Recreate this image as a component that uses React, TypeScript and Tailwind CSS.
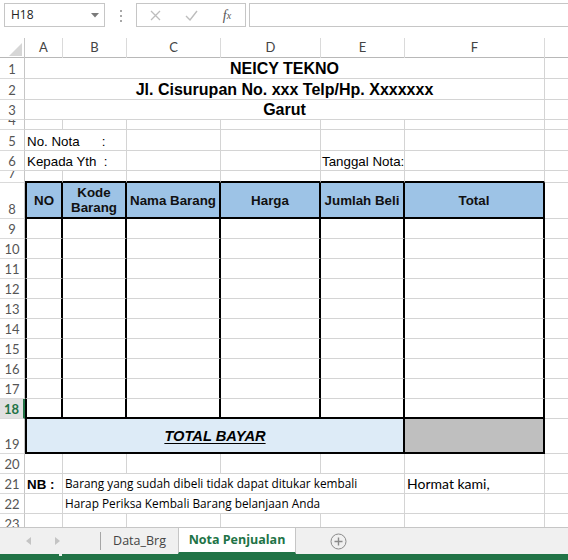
import React from "react";

const R: Record<string, string> = {
  g: "border-r border-r-[#d4d4d4]",
  k: "border-r-2 border-r-black",
  n: "",
};
const B: Record<string, string> = {
  g: "border-b border-b-[#d4d4d4]",
  k: "border-b-2 border-b-black",
  n: "",
};
const SPAN: Record<number, string> = {
  1: "",
  2: "col-span-2",
  4: "col-span-4",
  5: "col-span-5",
  6: "col-span-6",
};

type CellProps = {
  r?: string;
  b?: string;
  l?: boolean;
  span?: number;
  className?: string;
  children?: React.ReactNode;
};

const Cell = ({ r = "g", b = "g", l = false, span = 1, className = "", children }: CellProps) => (
  <div
    className={`${R[r]} ${B[b]} ${l ? "border-l-2 border-l-black" : ""} ${SPAN[span]} min-w-0 overflow-hidden whitespace-nowrap ${className}`}
  >
    {children}
  </div>
);

const Row = ({
  n,
  h,
  sel = false,
  children,
}: {
  n: number;
  h: string;
  sel?: boolean;
  children?: React.ReactNode;
}) => (
  <div className={`grid grid-cols-[25px_38px_64px_94px_100px_84px_140px_1fr] shrink-0 ${h}`}>
    <div
      className={`flex items-end justify-center overflow-hidden border-b border-b-[#dadada] font-['Lato',sans-serif] text-[13px] leading-none ${
        sel
          ? "border-r-2 border-r-[#217346] bg-[#e1e1e1] font-bold text-[#217346]"
          : "border-r border-r-[#c6c6c6] text-[#555]"
      }`}
    >
      <span className="pb-[2px]">{n}</span>
    </div>
    {children}
  </div>
);

const Blank = () => (
  <>
    <Cell />
    <Cell />
    <Cell />
    <Cell />
    <Cell />
    <Cell />
    <Cell r="n" />
  </>
);

const TableRow = ({ n, last = false, sel = false }: { n: number; last?: boolean; sel?: boolean }) => {
  const b = last ? "k" : "g";
  return (
    <Row n={n} h="h-[20px]" sel={sel}>
      <Cell l r="k" b={b} />
      <Cell r="k" b={b} />
      <Cell r="k" b={b} />
      <Cell r="k" b={b} />
      <Cell r="k" b={b} />
      <Cell r="k" b={b} />
      <Cell r="n" />
    </Row>
  );
};

const arial = "font-['Liberation_Sans',Arial,sans-serif]";

export default function App() {
  const head = `${arial} flex items-center justify-center bg-[#9dc3e6] text-center text-[13.33px] font-bold leading-[15px] text-[#111]`;
  const note = "flex items-end pb-[3px] pl-[2px] font-['Open_Sans',sans-serif] text-[11.8px] leading-none text-black";
  return (
    <div className="flex h-[560px] w-[568px] flex-col overflow-hidden bg-white">
      {/* formula bar */}
      <div className="flex h-[38px] shrink-0 items-start gap-0 pt-[3px] font-['Open_Sans',sans-serif]">
        <div className="ml-[4px] flex h-[24px] w-[101px] items-center justify-between border border-[#c6c6c6] pl-[6px] pr-[5px] text-[12px] text-[#222]">
          <span>H18</span>
          <svg width="8" height="5" viewBox="0 0 8 5">
            <path d="M0 0h8L4 4.5z" fill="#7a7a7a" />
          </svg>
        </div>
        <div className="flex w-[31px] flex-col items-center gap-[3px] pt-[7px]">
          <span className="h-[2px] w-[2px] bg-[#a8a8a8]" />
          <span className="h-[2px] w-[2px] bg-[#a8a8a8]" />
          <span className="h-[2px] w-[2px] bg-[#a8a8a8]" />
        </div>
        <div className="flex h-[24px] w-[110px] items-center border border-[#c6c6c6]">
          <div className="flex w-[36px] justify-center">
            <svg width="11" height="11" viewBox="0 0 11 11">
              <path d="M1 1l9 9M10 1l-9 9" stroke="#bdbdbd" strokeWidth="1.3" />
            </svg>
          </div>
          <div className="flex w-[36px] justify-center">
            <svg width="13" height="11" viewBox="0 0 13 11">
              <path d="M1 6l4 4L12 1" stroke="#bdbdbd" strokeWidth="1.4" fill="none" />
            </svg>
          </div>
          <div className="flex w-[36px] justify-center font-['Liberation_Serif',serif] text-[14px] italic text-[#555]">
            f<span className="mt-[3px] text-[10px]">x</span>
          </div>
        </div>
        <div className="ml-[3px] h-[24px] flex-1 border border-r-0 border-[#c6c6c6]" />
      </div>

      {/* sheet */}
      <div className="flex h-[489px] shrink-0 flex-col overflow-hidden">
        {/* column headers */}
        <div className="grid h-[20px] shrink-0 grid-cols-[25px_38px_64px_94px_100px_84px_140px_1fr] border-b border-b-[#b8b8b8] font-['Lato',sans-serif] text-[13px] text-[#444]">
          <div className="flex items-end justify-end border-r border-r-[#c6c6c6] pb-[2px] pr-[2px]">
            <svg width="13" height="13" viewBox="0 0 13 13">
              <path d="M13 0v13H0z" fill="#d6d6d6" />
            </svg>
          </div>
          {["A", "B", "C", "D", "E", "F"].map((c) => (
            <div key={c} className="flex items-center justify-center border-r border-r-[#dadada]">
              {c}
            </div>
          ))}
          <div />
        </div>

        <Row n={1} h="h-[21px]">
          <Cell span={6} className={`${arial} flex items-end justify-center pb-[1px] text-[16px] font-bold leading-none text-black`}>
            NEICY TEKNO
          </Cell>
          <Cell r="n" />
        </Row>
        <Row n={2} h="h-[21px]">
          <Cell span={6} className={`${arial} flex items-end justify-center pb-[1px] text-[16px] font-bold leading-none text-black`}>
            Jl. Cisurupan No. xxx Telp/Hp. Xxxxxxx
          </Cell>
          <Cell r="n" />
        </Row>
        <Row n={3} h="h-[20px]">
          <Cell span={6} className={`${arial} flex items-end justify-center pb-[1px] text-[16px] font-bold leading-none text-black`}>
            Garut
          </Cell>
          <Cell r="n" />
        </Row>
        <Row n={4} h="h-[10px]">
          <Blank />
        </Row>
        <Row n={5} h="h-[21px]">
          <Cell span={2} className={`${arial} flex items-end whitespace-pre pb-[2px] pl-[2px] text-[13.33px] leading-none text-black`}>
            {"No. Nota      :"}
          </Cell>
          <Cell />
          <Cell />
          <Cell />
          <Cell />
          <Cell r="n" />
        </Row>
        <Row n={6} h="h-[20px]">
          <Cell span={2} className={`${arial} flex items-end whitespace-pre pb-[2px] pl-[2px] text-[13.33px] leading-none text-black`}>
            {"Kepada Yth  :"}
          </Cell>
          <Cell />
          <Cell />
          <Cell className={`${arial} flex items-end pb-[2px] pl-[1px] text-[13.33px] leading-none text-black`}>
            Tanggal Nota:
          </Cell>
          <Cell />
          <Cell r="n" />
        </Row>
        <Row n={7} h="h-[12px]">
          <Cell b="k" />
          <Cell b="k" />
          <Cell b="k" />
          <Cell b="k" />
          <Cell b="k" />
          <Cell b="k" />
          <Cell r="n" />
        </Row>
        <Row n={8} h="h-[36px]">
          <Cell l r="k" b="k" className={head}>NO</Cell>
          <Cell r="k" b="k" className={head}>
            Kode
            <br />
            Barang
          </Cell>
          <Cell r="k" b="k" className={head}>Nama Barang</Cell>
          <Cell r="k" b="k" className={head}>Harga</Cell>
          <Cell r="k" b="k" className={head}>Jumlah Beli</Cell>
          <Cell r="k" b="k" className={head}>Total</Cell>
          <Cell r="n" />
        </Row>
        {[9, 10, 11, 12, 13, 14, 15, 16, 17].map((n) => (
          <TableRow key={n} n={n} />
        ))}
        <TableRow n={18} last sel />
        <Row n={19} h="h-[35px]">
          <Cell
            span={5}
            l
            r="k"
            b="k"
            className={`${arial} flex items-center justify-center bg-[#ddebf7] text-[14.67px] font-bold italic text-black underline underline-offset-2`}
          >
            TOTAL BAYAR
          </Cell>
          <Cell r="k" b="k" className="bg-[#bfbfbf]" />
          <Cell r="n" />
        </Row>
        <Row n={20} h="h-[20px]">
          <Blank />
        </Row>
        <Row n={21} h="h-[20px]">
          <Cell className={`${arial} flex items-end pb-[2px] pl-[2px] text-[13.33px] font-bold leading-none text-black`}>
            NB :
          </Cell>
          <Cell span={4} className={note}>
            Barang yang sudah dibeli tidak dapat ditukar kembali
          </Cell>
          <Cell className="flex items-end pb-[2px] pl-[2px] font-['Lato',sans-serif] text-[14px] leading-none text-black">
            Hormat kami,
          </Cell>
          <Cell r="n" />
        </Row>
        <Row n={22} h="h-[20px]">
          <Cell />
          <Cell span={4} className={note}>
            Harap Periksa Kembali Barang belanjaan Anda
          </Cell>
          <Cell />
          <Cell r="n" />
        </Row>
        <Row n={23} h="h-[20px]">
          <Blank />
        </Row>
      </div>

      {/* sheet tabs */}
      <div className="flex h-[27px] shrink-0 items-stretch border-t border-t-[#c6c6c6] bg-[#f0f0f0] font-['Open_Sans',sans-serif]">
        <div className="flex w-[100px] items-center">
          <svg className="ml-[26px]" width="5" height="8" viewBox="0 0 5 8">
            <path d="M5 0v8L0 4z" fill="#c4c4c4" />
          </svg>
          <svg className="ml-[24px]" width="5" height="8" viewBox="0 0 5 8">
            <path d="M0 0v8l5-4z" fill="#c4c4c4" />
          </svg>
        </div>
        <div className="my-[4px] w-px bg-[#a6a6a6]" />
        <div className="flex w-[77px] items-center justify-center text-[12.5px] text-[#444]">Data_Brg</div>
        <div className="flex w-[118px] items-center justify-center border-x border-x-[#c6c6c6] border-b-2 border-b-[#217346] bg-white pt-[1px] text-[12.5px] font-bold text-[#217346]">
          Nota Penjualan
        </div>
        <div className="flex w-[84px] items-center justify-center">
          <svg width="17" height="17" viewBox="0 0 17 17">
            <circle cx="8.5" cy="8.5" r="7.5" fill="none" stroke="#8a8a8a" strokeWidth="1" />
            <path d="M8.5 4.5v8M4.5 8.5h8" stroke="#8a8a8a" strokeWidth="1.4" />
          </svg>
        </div>
      </div>
      <div className="flex h-[6px] shrink-0 bg-[#217346]">
        <span className="ml-[59px] h-[2px] w-[3px] bg-[#e8f2ec]" />
      </div>
    </div>
  );
}
